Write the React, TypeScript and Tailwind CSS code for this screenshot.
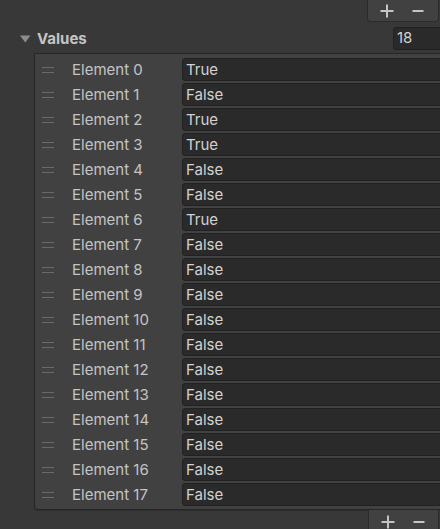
import React from "react";

const values = [true, false, true, true, false, false, true, false, false, false, false, false, false, false, false, false, false, false];

function PlusMinus() {
  return (
    <div className="flex items-center h-full">
      <svg width="14" height="14" viewBox="0 0 14 14" className="ml-[12px]">
        <rect x="0.5" y="6" width="13" height="2" fill="#c4c4c4" />
        <rect x="6" y="0.5" width="2" height="13" fill="#c4c4c4" />
      </svg>
      <svg width="12" height="14" viewBox="0 0 12 14" className="ml-[18px]">
        <rect x="0.5" y="6" width="11" height="2" fill="#c4c4c4" />
      </svg>
    </div>
  );
}

function Handle() {
  return (
    <div className="w-[12px] flex flex-col gap-[4px]">
      <div className="h-px bg-[#6a6a6a]" />
      <div className="h-px bg-[#6a6a6a]" />
    </div>
  );
}

export default function App() {
  return (
    <div
      className="w-[440px] h-[529px] bg-[#383838] overflow-hidden text-[15px] text-[#c4c4c4]"
      style={{ fontFamily: "Inter, 'Noto Sans', sans-serif" }}
    >
      {/* footer of the list above */}
      <div className="flex justify-end pr-px">
        <div className="w-[72px] h-[22px] bg-[#414141] border border-t-0 border-[#2b2b2b] rounded-b-[4px]">
          <PlusMinus />
        </div>
      </div>

      {/* header */}
      <div className="flex items-center h-[23px] mt-[5px]">
        <svg width="11" height="8" viewBox="0 0 11 8" className="ml-[20px]">
          <polygon points="0,0.5 10.5,0.5 5.25,7.5" fill="#8c8c8c" />
        </svg>
        <span className="ml-[6px] font-bold leading-none">Values</span>
        <div className="ml-auto w-[60px] h-[23px] mr-[-13px] bg-[#2a2a2a] border border-[#212121] rounded-[3px] flex items-center pl-[3px] text-[#d2d2d2]">
          18
        </div>
      </div>

      {/* list body */}
      <div className="ml-[34px] mt-[3px] w-[440px] bg-[#414141] border border-[#262626] rounded-bl-[4px] pt-[3px] pb-[2px] shadow-[0_1px_0_#2e2e2e]">
        {values.map((v, i) => (
          <div key={i} className="flex items-center h-[25px]">
            <div className="ml-[7px]">
              <Handle />
            </div>
            <span className="ml-[18px] w-[110px] shrink-0 text-[#c4c4c4] leading-none">Element {i}</span>
            <div className="h-[23px] w-[300px] shrink-0 bg-[#2a2a2a] border border-[#212121] rounded-[3px] flex items-center pl-[3px] text-[#d2d2d2] leading-none">
              {v ? "True" : "False"}
            </div>
          </div>
        ))}
      </div>

      {/* footer of this list */}
      <div className="flex justify-end pr-px">
        <div className="w-[71px] h-[30px] bg-[#414141] border border-t-0 border-[#2b2b2b] rounded-b-[4px]">
          <div className="h-[24px]">
            <PlusMinus />
          </div>
        </div>
      </div>
    </div>
  );
}
